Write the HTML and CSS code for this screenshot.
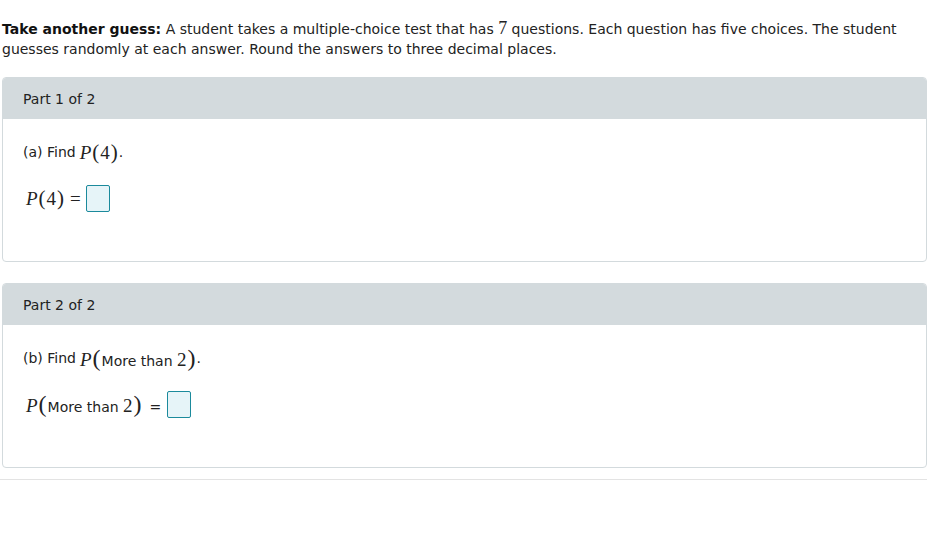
FILE: index.html
```html
<!DOCTYPE html>
<html>
<head>
<meta charset="utf-8">
<link rel="stylesheet" href="styles.css">
</head>
<body>
<div class="page">
  <p class="intro"><b>Take another guess:</b> A student takes a multiple-choice test that has <span class="mn">7</span> questions. Each question has five choices. The student guesses randomly at each answer. Round the answers to three decimal places.</p>

  <section class="card">
    <div class="card-head">Part 1 of 2</div>
    <div class="card-body">
      <div class="q">(a) Find <span class="math"><span class="mi">P</span><span class="paren">(</span><span class="mn">4</span><span class="paren">)</span></span>.</div>
      <div class="ans">
        <span class="math"><span class="mi">P</span><span class="paren">(</span><span class="mn">4</span><span class="paren">)</span><span class="eq">=</span></span>
        <span class="box"></span>
      </div>
    </div>
  </section>

  <section class="card">
    <div class="card-head">Part 2 of 2</div>
    <div class="card-body">
      <div class="q">(b) Find <span class="math"><span class="mi">P</span><span class="paren big">(</span><span class="txt">More than </span><span class="mn">2</span><span class="paren big">)</span></span>.</div>
      <div class="ans">
        <span class="math"><span class="mi">P</span><span class="paren big">(</span><span class="txt">More than </span><span class="mn">2</span><span class="paren big">)</span><span class="eq small">=</span></span>
        <span class="box"></span>
      </div>
    </div>
  </section>
  <div class="rule"></div>
</div>
</body>
</html>
```

FILE: styles.css
```css
html, body {
  margin: 0;
  padding: 0;
  background: #ffffff;
}
body {
  font-family: "DejaVu Sans", Verdana, sans-serif;
  font-size: 14px;
  color: #222222;
}
.page {
  padding: 19px 0 0 2px;
}
.intro {
  margin: 0 0 18px 0;
  line-height: 20px;
}
.intro b {
  font-weight: bold;
  color: #111;
}
.intro .mn {
  line-height: 1;
  font-size: 18px;
}
.mn {
  font-family: "Liberation Serif", "Times New Roman", serif;
  font-size: 19px;
}
.mi {
  font-family: "Liberation Serif", "Times New Roman", serif;
  font-style: italic;
  font-size: 19px;
}
.paren {
  font-family: "Liberation Serif", "Times New Roman", serif;
  font-size: 21px;
  margin: 0 1px;
}
.paren.big {
  font-size: 24px;
}
.txt {
  font-size: 14px;
}
.eq {
  font-family: "Liberation Serif", "Times New Roman", serif;
  font-size: 19px;
  margin: 0 5px 0 5px;
}
.eq.small {
  font-family: "DejaVu Sans", Verdana, sans-serif;
  font-size: 14px;
  margin: 0 6px 0 7px;
}
.card {
  border: 1px solid #d3dadd;
  border-radius: 4px;
  margin-bottom: 21px;
  overflow: hidden;
}
.card-head {
  background: #d3dadd;
  height: 41px;
  line-height: 42px;
  padding-left: 20px;
  color: #222;
}
.card-body {
  padding: 22px 20px 0 20px;
  height: 142px;
  box-sizing: border-box;
}
.q {
  height: 22px;
  display: flex;
  align-items: center;
}
.q .math {
  margin-left: 4px;
}
.ans {
  margin-top: 21px;
  display: flex;
  align-items: center;
  height: 28px;
}
.ans .math {
  margin-left: 3px;
}
.box {
  display: inline-block;
  width: 22px;
  height: 25px;
  border: 1px solid #1b8a9c;
  border-radius: 2px;
  background: #e6f4f8;
}
.rule {
  margin: -10px 0 0 -2px;
  border-top: 1px solid #e3e3e3;
}
```
